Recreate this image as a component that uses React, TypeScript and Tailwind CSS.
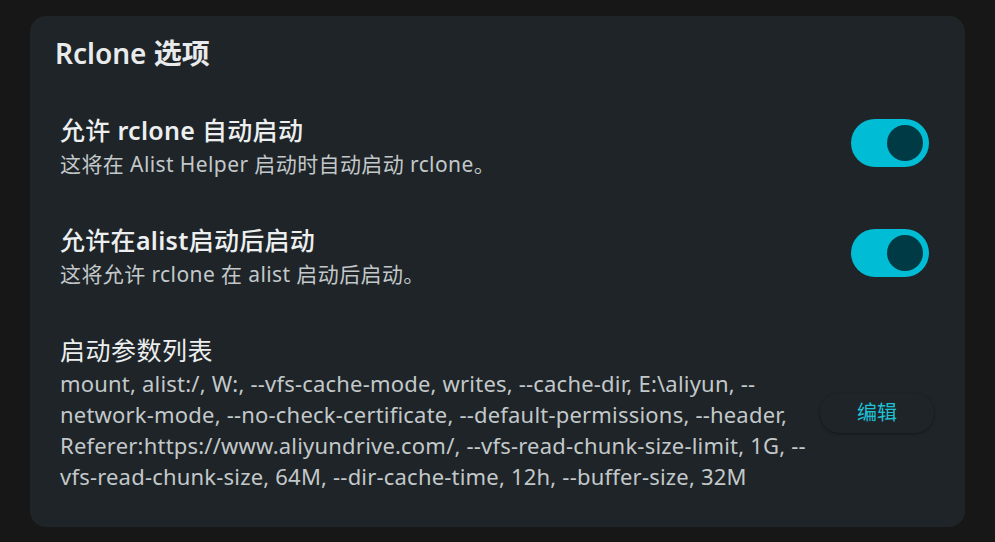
import React, { useState } from 'react';

const font = { fontFamily: '"Noto Sans", "Noto Sans CJK SC", sans-serif' };

const paramLines = [
  'mount, alist:/, W:, --vfs-cache-mode, writes, --cache-dir, E:\\aliyun, --',
  'network-mode, --no-check-certificate, --default-permissions, --header,',
  'Referer:https://www.aliyundrive.com/, --vfs-read-chunk-size-limit, 1G, --',
  'vfs-read-chunk-size, 64M, --dir-cache-time, 12h, --buffer-size, 32M',
];

const Toggle: React.FC<{ checked: boolean; onChange: (v: boolean) => void }> = ({ checked, onChange }) => (
  <button
    onClick={() => onChange(!checked)}
    className={`flex h-[48px] w-[78px] shrink-0 items-center rounded-full px-[6px] ${
      checked ? 'justify-end bg-[#00bcd4]' : 'justify-start bg-[#3a4448]'
    }`}
  >
    <span className={`block h-[36px] w-[36px] rounded-full ${checked ? 'bg-[#003a44]' : 'bg-[#8a9599]'}`} />
  </button>
);

const App: React.FC = () => {
  const [autoStart, setAutoStart] = useState(true);
  const [afterAlist, setAfterAlist] = useState(true);

  return (
    <div className="h-[542px] w-[995px] bg-[#171717] px-[30px] pt-4 pb-[15px]" style={font}>
      <div className="flex h-full flex-col rounded-2xl bg-[#1e2427]">
        {/* Header */}
        <h2 className="pt-[19px] pl-[25px] text-[28px] font-semibold leading-[36px] text-[#e8eaeb]">
          Rclone 选项
        </h2>

        {/* Auto start rclone */}
        <div className="mt-[43px] flex items-center justify-between pl-[30px] pr-[36px]">
          <div>
            <div className="text-[25px] font-medium leading-[32px] tracking-[0.3px] text-[#eceeef]">
              允许 <span className="font-semibold">rclone</span> 自动启动
            </div>
            <div className="mt-[3px] text-[21px] leading-[30px] tracking-[0.4px] text-[#c3c8ca]">
              这将在 Alist Helper 启动时自动启动 rclone。
            </div>
          </div>
          <div className="mb-[7px]">
            <Toggle checked={autoStart} onChange={setAutoStart} />
          </div>
        </div>

        {/* Start after alist */}
        <div className="mt-[45px] flex items-center justify-between pl-[30px] pr-[36px]">
          <div>
            <div className="text-[25px] font-medium leading-[32px] tracking-[0.3px] text-[#eceeef]">
              允许在<span className="font-semibold">alist</span>启动后启动
            </div>
            <div className="mt-[3px] text-[21px] leading-[30px] tracking-[0.4px] text-[#c3c8ca]">
              这将允许 rclone 在 alist 启动后启动。
            </div>
          </div>
          <div className="mb-[7px]">
            <Toggle checked={afterAlist} onChange={setAfterAlist} />
          </div>
        </div>

        {/* Start params */}
        <div className="mt-[45px] flex items-center justify-between pl-[30px] pr-[31px]">
          <div className="min-w-0">
            <div className="text-[25px] leading-[32px] tracking-[0.5px] text-[#eceeef]">启动参数列表</div>
            <div className="mt-[2px] text-[22px] leading-[31px] tracking-[0.2px] text-[#c3c8ca]">
              {paramLines.map((l) => (
                <div key={l} className="whitespace-nowrap">{l}</div>
              ))}
            </div>
          </div>
          <button className="h-[40px] w-[114px] shrink-0 rounded-full bg-[#1e2427] text-[20px] text-[#1fc1d6] shadow-[0_1px_3px_rgba(0,0,0,0.35)]">
            编辑
          </button>
        </div>
      </div>
    </div>
  );
};

export default App;
